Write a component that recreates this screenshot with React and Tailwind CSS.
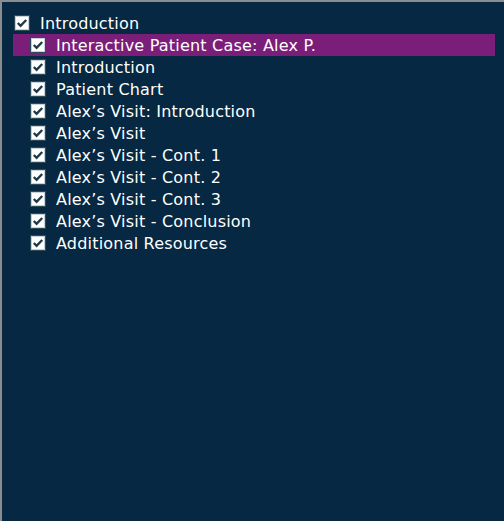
import React from "react";

function Check() {
  return (
    <div className="w-[16px] h-[16px] shrink-0 border border-[#2c4b58] bg-white shadow-[inset_0_0_0_1px_#c8d2d6] flex items-center justify-center">
      <svg width="12" height="12" viewBox="0 0 12 12">
        <path d="M1.8 6 L4.6 8.8 L10.2 3" fill="none" stroke="#1e3a48" strokeWidth="2.4" />
      </svg>
    </div>
  );
}

const items = [
  "Interactive Patient Case: Alex P.",
  "Introduction",
  "Patient Chart",
  "Alex\u2019s Visit: Introduction",
  "Alex\u2019s Visit",
  "Alex\u2019s Visit - Cont. 1",
  "Alex\u2019s Visit - Cont. 2",
  "Alex\u2019s Visit - Cont. 3",
  "Alex\u2019s Visit - Conclusion",
  "Additional Resources",
];

export default function App() {
  return (
    <div
      className="w-[504px] h-[521px] bg-[#062842] border-t-[2px] border-l-[2px] border-[#8c8c8c] text-white pt-[10px] overflow-hidden tracking-[0.2px]"
      style={{ fontFamily: '"DejaVu Sans", Verdana, sans-serif' }}
    >
      <div className="flex items-center h-[22px] pl-[12px] gap-[10px] text-[16px]">
        <Check />
        <span className="pt-[2px]">Introduction</span>
      </div>
      <div className="flex flex-col">
        {items.map((t, i) => (
          <div
            key={i}
            className={
              "flex items-center h-[22px] ml-[11px] mr-[9px] pl-[17px] gap-[10px] text-[16px] " +
              (i === 0 ? "bg-[#7b1e7a]" : "")
            }
          >
            <Check />
            <span className="pt-[2px]">{t}</span>
          </div>
        ))}
      </div>
    </div>
  );
}
